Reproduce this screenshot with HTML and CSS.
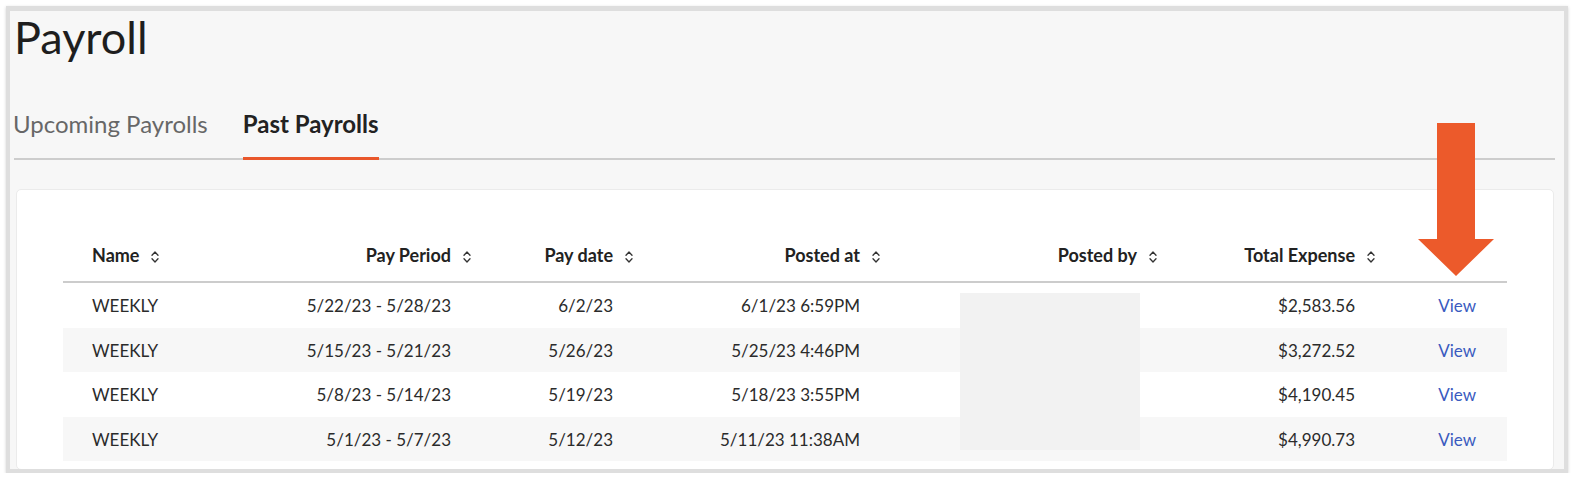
FILE: index.html
```html
<!DOCTYPE html>
<html lang="en">
<head>
<meta charset="utf-8">
<title>Payroll</title>
<link rel="stylesheet" href="styles.css">
</head>
<body>
<div class="frame">
  <h1 class="title">Payroll</h1>
  <nav class="tabs">
    <div class="tab">Upcoming Payrolls</div>
    <div class="tab active">Past Payrolls</div>
  </nav>
  <section class="card">
    <table class="grid">
      <colgroup>
        <col class="c1"><col class="c2"><col class="c3"><col class="c4"><col class="c5"><col class="c6"><col class="c7">
      </colgroup>
      <thead>
        <tr>
          <th class="left">Name<svg class="sort" viewBox="0 0 8 14"><path d="M1 5.2 4 2 7 5.2M1 8.8 4 12 7 8.8"/></svg></th>
          <th>Pay Period<svg class="sort" viewBox="0 0 8 14"><path d="M1 5.2 4 2 7 5.2M1 8.8 4 12 7 8.8"/></svg></th>
          <th>Pay date<svg class="sort" viewBox="0 0 8 14"><path d="M1 5.2 4 2 7 5.2M1 8.8 4 12 7 8.8"/></svg></th>
          <th>Posted at<svg class="sort" viewBox="0 0 8 14"><path d="M1 5.2 4 2 7 5.2M1 8.8 4 12 7 8.8"/></svg></th>
          <th>Posted by<svg class="sort" viewBox="0 0 8 14"><path d="M1 5.2 4 2 7 5.2M1 8.8 4 12 7 8.8"/></svg></th>
          <th>Total Expense<svg class="sort" viewBox="0 0 8 14"><path d="M1 5.2 4 2 7 5.2M1 8.8 4 12 7 8.8"/></svg></th>
          <th></th>
        </tr>
      </thead>
      <tbody>
        <tr>
          <td class="left">WEEKLY</td>
          <td>5/22/23 - 5/28/23</td>
          <td>6/2/23</td>
          <td>6/1/23 6:59PM</td>
          <td class="by"><div class="redact"></div></td>
          <td>$2,583.56</td>
          <td class="view"><a href="#">View</a></td>
        </tr>
        <tr>
          <td class="left">WEEKLY</td>
          <td>5/15/23 - 5/21/23</td>
          <td>5/26/23</td>
          <td>5/25/23 4:46PM</td>
          <td></td>
          <td>$3,272.52</td>
          <td class="view"><a href="#">View</a></td>
        </tr>
        <tr>
          <td class="left">WEEKLY</td>
          <td>5/8/23 - 5/14/23</td>
          <td>5/19/23</td>
          <td>5/18/23 3:55PM</td>
          <td></td>
          <td>$4,190.45</td>
          <td class="view"><a href="#">View</a></td>
        </tr>
        <tr>
          <td class="left">WEEKLY</td>
          <td>5/1/23 - 5/7/23</td>
          <td>5/12/23</td>
          <td>5/11/23 11:38AM</td>
          <td></td>
          <td>$4,990.73</td>
          <td class="view"><a href="#">View</a></td>
        </tr>
      </tbody>
    </table>
  </section>
  <svg class="arrow" viewBox="0 0 76 153" width="76" height="153"><path d="M19 0H57V116H76L38 153L0 116H19Z"/></svg>
</div>
</body>
</html>
```

FILE: styles.css
```css
html, body {
  margin: 0;
  padding: 0;
  background: #ffffff;
}

body {
  font-family: Lato, "Noto Sans", sans-serif;
  color: #2b2b2b;
}

.frame {
  position: relative;
  box-sizing: border-box;
  margin: 6px 0 0 6px;
  width: 1562px;
  height: 467px;
  border: 4px solid #dedede;
  border-top-width: 5px;
  box-shadow: 0 1px 3px rgba(0, 0, 0, 0.18);
  background: #f7f7f7;
  padding: 0 9px 0 4px;
  overflow: hidden;
}

.title {
  margin: 0;
  font-size: 45px;
  line-height: 52px;
  font-weight: 400;
  color: #1e1e1e;
}

.tabs {
  display: flex;
  gap: 36px;
  margin-top: 47px;
  border-bottom: 2px solid #cdcdcd;
}

.tab {
  font-size: 24px;
  line-height: 28px;
  color: #676767;
  padding-bottom: 19px;
  margin-left: -1px;
}

.tab.active {
  color: #222222;
  font-weight: 700;
  border-bottom: 3px solid #e9572b;
  margin-bottom: -2px;
}

.card {
  margin: 29px 1px 0 2px;
  background: #ffffff;
  border: 1px solid #ebebeb;
  border-radius: 5px;
  padding: 40px 46px 8px;
}

.grid {
  width: 100%;
  border-collapse: collapse;
  table-layout: fixed;
  font-size: 17px;
}

.c1 { width: 137px; }
.c2 { width: 281px; }
.c3 { width: 162px; }
.c4 { width: 247px; }
.c5 { width: 277px; }
.c6 { width: 218px; }
.c7 { width: 122px; }

.grid th {
  text-align: right;
  font-size: 18px;
  font-weight: 700;
  color: #222222;
  line-height: 20px;
  padding: 15px 10px 16px;
  border-bottom: 2px solid #cccccc;
  white-space: nowrap;
}

.grid th.left {
  text-align: left;
  padding-left: 29px;
}

.sort {
  width: 8px;
  height: 14px;
  margin-left: 12px;
  vertical-align: -2px;
  fill: none;
  stroke: #333333;
  stroke-width: 1.3;
}

.sort path {
  stroke-linecap: round;
  stroke-linejoin: round;
}

.grid td {
  text-align: right;
  line-height: 20px;
  padding: 13px 30px 11.5px 10px;
  color: #2b2b2b;
  white-space: nowrap;
}

.grid td.left {
  text-align: left;
  padding-left: 29px;
}

.grid tbody tr:nth-child(even) {
  background: #f7f7f7;
}

.grid td.by {
  position: relative;
}

.redact {
  position: absolute;
  top: 10px;
  right: 27px;
  width: 180px;
  height: 157px;
  background: #f2f2f2;
}

.grid td.view {
  padding-right: 31px;
}

.view a {
  color: #3a5bbf;
  text-decoration: none;
}

.arrow {
  position: absolute;
  left: 1408px;
  top: 112px;
  fill: #ec5a2b;
}
```
